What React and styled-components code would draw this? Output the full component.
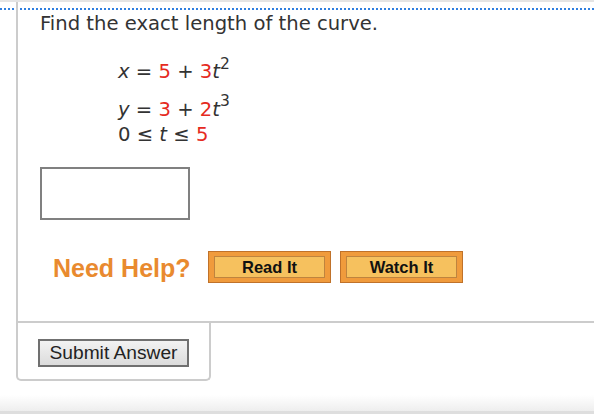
import React from "react";
import styled, { createGlobalStyle } from "styled-components";

const Global = createGlobalStyle`
  html { background: #fff; }
  html, body { margin: 0; padding: 0; }
  body { font-family: "DejaVu Sans", Verdana, sans-serif; }
`;

const Page = styled.div`
  width: 594px;
  height: 414px;
  display: flex;
  flex-direction: column;
  overflow: hidden;
  border-top: 2px solid #e4e4e4;
  box-sizing: border-box;
`;

const Panel = styled.section`
  position: relative;
  margin-left: 16px;
  border-left: 2px solid #cccccc;
  border-bottom: 2px solid #cccccc;
  padding: 10px 0 38px 22px;
  &::before {
    content: "";
    position: absolute;
    z-index: -1;
    top: 6px;
    left: -18px;
    right: 0;
    height: 2px;
    background: linear-gradient(to right, #2f7fe0 50%, transparent 50%);
    background-size: 4px 2px;
  }
`;

const Prompt = styled.p`
  margin: 0;
  font-size: 19.6px;
  line-height: 24px;
  color: #333;
`;

const Equations = styled.div`
  margin: 23px 0 0 78px;
  font-size: 19.6px;
  color: #333;
`;

const EqRow = styled.div`
  line-height: 25px;
  height: 25px;
  margin-top: ${(p) => p.$gap || 0}px;
  white-space: pre;
`;

const Var = styled.i`
  font-style: italic;
`;

const Num = styled.span`
  color: #e52a1e;
`;

const Sup = styled.sup`
  font-size: 15.5px;
  line-height: 0;
  vertical-align: ${(p) => p.$raise || 9}px;
`;

const AnswerBox = styled.input`
  display: block;
  margin: 20px 0 0 0;
  width: 150px;
  height: 53px;
  box-sizing: border-box;
  border: 2px solid #808080;
  background: #fff;
  outline: none;
`;

const HelpRow = styled.div`
  margin-top: 31px;
  display: flex;
  align-items: center;
  height: 32px;
`;

const HelpLabel = styled.span`
  font-family: "Liberation Sans", Arial, sans-serif;
  font-weight: bold;
  font-size: 25px;
  color: #e98a2f;
  margin-left: 13px;
  padding-top: 2px;
  width: 155px;
`;

const HelpButton = styled.button`
  width: 123px;
  height: 32px;
  box-sizing: border-box;
  margin-right: 9px;
  padding: 4px 5px;
  border: 1px solid #c0722a;
  background: #f09b3c;
  display: flex;
  cursor: pointer;
`;

const HelpFace = styled.span`
  flex: 1;
  display: flex;
  align-items: center;
  justify-content: center;
  border: 1px solid #bf843e;
  background: #f6c15e;
  font-family: "Liberation Sans", Arial, sans-serif;
  font-weight: bold;
  font-size: 16.5px;
  color: #111;
`;

const SubmitBox = styled.div`
  margin-left: 16px;
  width: 195px;
  box-sizing: border-box;
  border: 2px solid #cccccc;
  border-top: none;
  border-radius: 0 0 5px 5px;
  padding: 16px 0 12px 20px;
`;

const SubmitButton = styled.button`
  display: block;
  width: 151px;
  height: 28px;
  box-sizing: border-box;
  border: 2px solid #707070;
  background: linear-gradient(#f2f2f2, #dcdcdc);
  font-family: "Liberation Sans", Arial, sans-serif;
  font-size: 19.2px;
  color: #222;
  padding: 0;
  cursor: pointer;
`;

const Footer = styled.div`
  margin-top: auto;
  height: 19px;
  box-sizing: border-box;
  background: linear-gradient(#ffffff, #eeeeee);
  border-bottom: 3px solid #dedede;
`;

export default function App() {
  return (
    <>
      <Global />
      <Page>
        <Panel>
          <Prompt>Find the exact length of the curve.</Prompt>
          <Equations>
            <EqRow>
              <Var>x</Var> = <Num>5</Num> + <Num>3</Num>
              <Var>t</Var>
              <Sup $raise={9}>2</Sup>
            </EqRow>
            <EqRow $gap={13}>
              <Var>y</Var> = <Num>3</Num> + <Num>2</Num>
              <Var>t</Var>
              <Sup $raise={10}>3</Sup>
            </EqRow>
            <EqRow>
              0 ≤ <Var>t</Var> ≤ <Num>5</Num>
            </EqRow>
          </Equations>
          <AnswerBox type="text" aria-label="answer" />
          <HelpRow>
            <HelpLabel>Need Help?</HelpLabel>
            <HelpButton>
              <HelpFace>Read It</HelpFace>
            </HelpButton>
            <HelpButton>
              <HelpFace>Watch It</HelpFace>
            </HelpButton>
          </HelpRow>
        </Panel>
        <SubmitBox>
          <SubmitButton>Submit Answer</SubmitButton>
        </SubmitBox>
        <Footer />
      </Page>
    </>
  );
}
